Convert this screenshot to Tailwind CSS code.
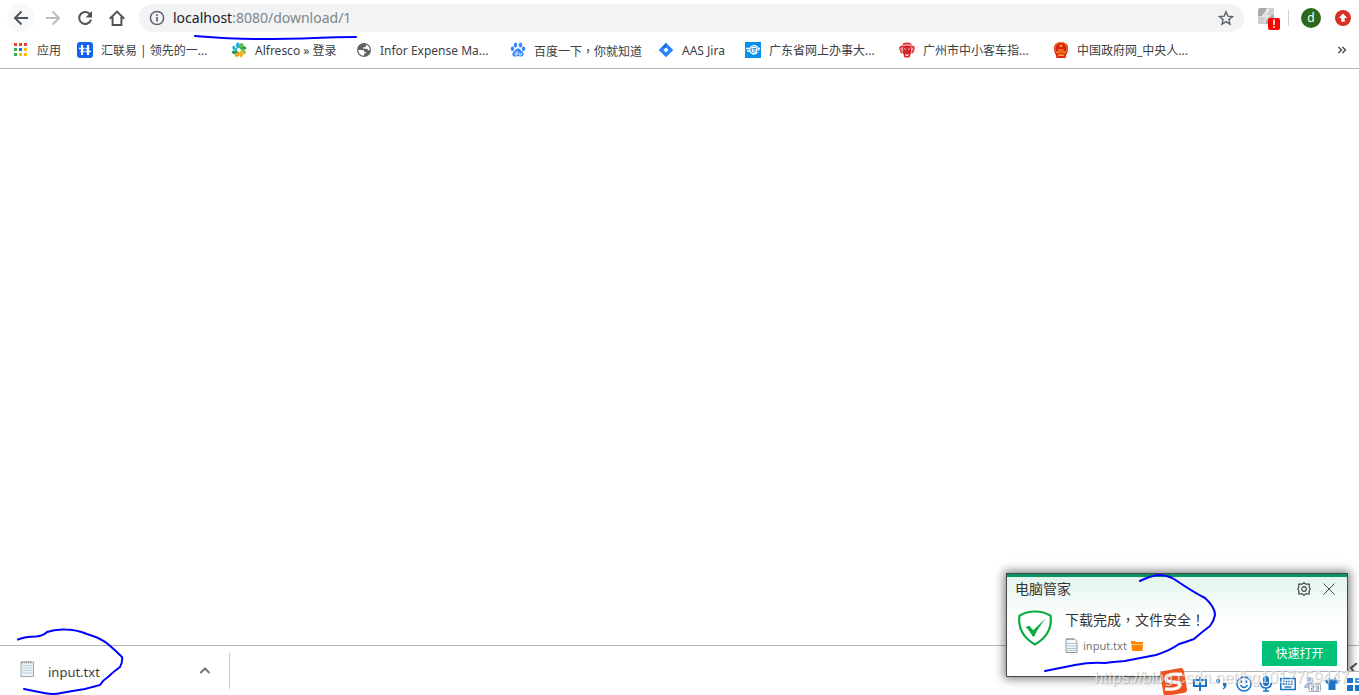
<!DOCTYPE html>
<html lang="zh-CN">
<head>
<meta charset="utf-8">
<title>localhost:8080/download/1</title>
<script src="https://cdn.jsdelivr.net/npm/@tailwindcss/browser@4"></script>
</head>
<body class="relative flex h-screen flex-col overflow-hidden bg-white font-['Noto_Sans','Noto_Sans_CJK_SC',sans-serif] text-[#3c4043]">

<header class="shrink-0 border-b border-[#b6b4b6]">
  <div class="flex h-9 items-center pr-2 pl-[7px] text-[#5f6368]">
    <div class="flex items-center gap-1">
      <button aria-label="后退" class="flex size-7 items-center justify-center rounded-full bg-[#f8f9fa]"><svg class="size-4" viewBox="0 0 16 16" fill="none" stroke="#505357" stroke-width="2"><path d="M15 8H2.5M8.5 1.5L2 8l6.500 6.500"/></svg></button>
      <button aria-label="前进" class="flex size-7 items-center justify-center"><svg class="size-4" viewBox="0 0 16 16" fill="none" stroke="#bbbdbf" stroke-width="2"><path d="M1 8h12.500M7.500 1.500L14 8l-6.500 6.500"/></svg></button>
      <button aria-label="重新加载" class="flex size-7 items-center justify-center"><svg class="size-4" viewBox="0 0 16 16"><path d="M13.300 4.700A6 6 0 1 0 14 9.600" fill="none" stroke="#505357" stroke-width="2"/><path d="M15 1v6.500H8.500z" fill="#505357"/></svg></button>
      <button aria-label="主页" class="flex size-7 items-center justify-center"><svg class="size-4" viewBox="0 0 16 16" fill="none" stroke="#505357" stroke-width="2"><path d="M.8 8.800L8 1.600l7.200 7.200M3.600 7v8h8.800V7"/></svg></button>
    </div>
    <div class="ml-2 flex h-7 flex-1 items-center gap-2 rounded-full bg-[#f1f3f4] px-[10px]">
      <svg class="size-4 shrink-0" viewBox="0 0 16 16" fill="none" stroke="#5f6368"><circle cx="8" cy="8" r="6.600" stroke-width="1.500"/><path d="M8 7v4.500M8 4.200v1.700" stroke-width="1.700"/></svg>
      <div class="flex-1 text-sm text-[#80868b]"><span class="text-[#202124]">localhost</span>:8080/download/1</div>
      <button aria-label="收藏"><svg class="size-4" viewBox="0 0 16 16" fill="none" stroke="#5f6368" stroke-width="1.400"><path d="M8 1.800l1.800 4.300 4.700.4-3.600 3.100 1.100 4.600L8 11.700l-4 2.500 1.100-4.600-3.600-3.100 4.700-.4z"/></svg></button>
    </div>
    <button aria-label="扩展程序" class="ml-3 pt-[2px]"><svg class="h-6 w-6" viewBox="0 0 24 24"><rect x="2" y="1" width="16" height="16" rx="2" fill="#aaa"/><path d="M10 1h6a2 2 0 0 1 2 2v5h-8zM2 9h8v8H4a2 2 0 0 1-2-2z" fill="#cfcfcf"/><path d="M11 2L5 10h5l-2 6 7-8h-5l4-6z" fill="#f2f2f2" opacity=".8"/><rect x="12" y="11" width="12" height="12" rx="2" fill="#f00"/><path d="M18 12.500v5.500M18 19.300v1.700" stroke="#fff" stroke-width="1.600"/></svg></button>
    <div class="ml-2 h-4 w-px bg-[#cfd1d4]"></div>
    <button class="ml-3 flex size-5 items-center justify-center rounded-full bg-[#2d6a1e] text-xs leading-none text-white">d</button>
    <button aria-label="更新" class="ml-[14px]"><svg class="size-4" viewBox="0 0 16 16"><circle cx="8" cy="8" r="8" fill="#d93025"/><path d="M8 3.500L3.800 8h2.500v3.800h3.400V8h2.500z" fill="#fff"/></svg></button>
  </div>

  <nav class="flex h-8 items-center pb-1 pl-[13px] text-xs whitespace-nowrap">
    <a href="#" class="flex w-16 shrink-0 items-center gap-2"><svg class="size-4" viewBox="0 0 16 16"><path fill="#ea4335" d="M1 1h3v3H1zM6 1h3v3H6zM11 1h3v3h-3z"/><path fill="#34a853" d="M1 6h3v3H1zM1 11h3v3H1z"/><path fill="#1a73e8" d="M6 6h3v3H6z"/><path fill="#fbbc04" d="M6 11h3v3H6z"/><path fill="#fbbc04" d="M11 6h3v3h-3zM11 11h3v3h-3z"/></svg><span class="pt-[2px]">应用</span></a>
    <a href="#" class="flex w-[154px] shrink-0 items-center gap-2"><svg class="size-4" viewBox="0 0 16 16"><rect width="16" height="16" rx="3" fill="#1463f3"/><path d="M5 3v10M11 3v10" stroke="#fff" stroke-width="2"/><path d="M2 6.500h5.500M8.500 6.500h4M3.500 9.500h4M8.500 9.500H14" stroke="#fff" stroke-width="1.300"/></svg><span class="pt-[2px]">汇联易 | 领先的一...</span></a>
    <a href="#" class="flex w-[125px] shrink-0 items-center gap-2"><svg class="size-4" viewBox="0 0 16 16"><g fill="none" stroke-width="3" stroke-linecap="round"><path stroke="#1eaee6" d="M7.200 5Q5.500 3 7 2"/><path stroke="#57b947" d="M9 5.200Q9.300 2.500 11 2.700"/><path stroke="#28a34a" d="M10.700 6.700Q12.500 4.800 13.800 6.200"/><path stroke="#8cc63f" d="M11 8.700Q13.500 9 13.300 10.800"/><path stroke="#f8b41c" d="M9.700 10.700Q11.300 12.500 10 13.800"/><path stroke="#f8a01c" d="M7.300 11Q7 13.500 5.200 13.300"/><path stroke="#1c9b4b" d="M5.300 9.500Q3.500 11.300 2.200 10"/><path stroke="#36b5c6" d="M5 7.300Q2.500 7 2.800 5.200"/></g><circle cx="8" cy="8" r="1.700" fill="#fff"/></svg><span class="pt-[2px]">Alfresco » 登录</span></a>
    <a href="#" class="flex w-[154px] shrink-0 items-center gap-2"><svg class="size-4" viewBox="0 0 16 16"><circle cx="8" cy="8" r="7" fill="#5f6368"/><path d="M2.300 8h4.200c1.500 0 1.800 1 1.800 2h1.500v1.500H8v2.200C5 13.700 2.300 11.500 2.300 8zM10 2.700V4c0 .8-.7 1.300-1.500 1.300H7.300v1.400h3.200c1 0 1.500.6 1.500 1.500h1.800c0-2.500-1.300-4.700-3.800-5.500z" fill="#fff"/></svg><span class="pt-[2px]">Infor Expense Ma...</span></a>
    <a href="#" class="flex w-[148px] shrink-0 items-center gap-2"><svg class="size-4" viewBox="0 0 16 16"><g fill="#3385ff"><ellipse cx="5.500" cy="3" rx="1.700" ry="2.500"/><ellipse cx="10.500" cy="3" rx="1.700" ry="2.500"/><ellipse cx="2.500" cy="6.700" rx="1.700" ry="2.200"/><ellipse cx="13.500" cy="6.700" rx="1.700" ry="2.200"/><path d="M8 6.500c2 0 3 2 4.500 3.300 2.300 2.200.7 5.200-2 4.700-1.700-.3-3.300-.3-5 0-2.700.5-4.300-2.500-2-4.700C5 8.500 6 6.500 8 6.500z"/></g><path d="M7 9v4H5.500q-1.200-1.200 0-2.300H7M9 10.500v2.300h2.300v-2.300" fill="none" stroke="#fff" stroke-width=".9"/></svg><span class="pt-[2px]">百度一下<span lang="zh-TW" class="font-['Noto_Sans_CJK_TC',sans-serif]">，</span>你就知道</span></a>
    <a href="#" class="flex w-[87px] shrink-0 items-center gap-2"><svg class="size-4" viewBox="0 0 16 16"><path d="M8 .7L15.300 8 8 15.300.7 8z" fill="#2684ff"/><path d="M8 .7L4.500 5.500 8 6z" fill="#1264d8"/><path d="M8 5.500L10.500 8 8 10.500 5.500 8z" fill="#fff"/></svg><span class="pt-[2px]">AAS Jira</span></a>
    <a href="#" class="flex w-[154px] shrink-0 items-center gap-2"><svg class="size-4" viewBox="0 0 16 16"><path fill="#0b8fec" d="M0 0h16v16H0z"/><g fill="none" stroke="#fff"><path d="M1 6.500h4M2 9h3M12.500 5Q8 1.800 5.500 5.500T8 12q3 0 4.500-2" stroke-width="1.300"/><path d="M7 8h4M7 5.500h4q1.500 2.500 0 4.500H7.500z" stroke-width="1"/></g><path d="M12 5l3.500 1-2.500 3.500z" fill="#fff"/></svg><span class="pt-[2px]">广东省网上办事大...</span></a>
    <a href="#" class="flex w-[154px] shrink-0 items-center gap-2"><svg class="size-4" viewBox="0 0 16 16"><path d="M4 1.500Q8-.3 12 1.500l1 2.300Q16 3.500 15.700 7L14 11.500l-2-.5-1.500 4.500h-5L4 11l-2 .5L.3 7Q0 3.500 3 3.800z" fill="#d8242b"/><path d="M3.500 3.500Q8 2 12.500 3.500M3.200 5v5.500M12.800 5v5.500M5.300 6.500l1.500 1M10.700 6.500l-1.500 1M7 12v1.500h2V12M1.300 7h1.400M14.700 7h-1.400" fill="none" stroke="#fff" stroke-width=".9"/></svg><span class="pt-[2px]">广州市中小客车指...</span></a>
    <a href="#" class="flex w-[150px] shrink-0 items-center gap-2"><svg class="size-4" viewBox="0 0 16 16"><path d="M8 0q7 0 7 6.500 0 3.500-1.500 5.500L12.500 16h-9L2.500 12Q1 10 1 6.500 1 0 8 0z" fill="#db1f13"/><circle cx="8" cy="6.500" r="6" fill="none" stroke="#e9861b" stroke-width="1"/><path d="M8 2l.6 1.300H10L9 4.200l.4 1.300L8 4.700l-1.400.8L7 4.200l-1-.9h1.400zM5 7.500h6v1H5zM3.500 9.500h9v1h-9zM4.500 13.500q3.500-2 7 0v1q-3.500-1.500-7 0z" fill="#fbb42d"/></svg><span class="pt-[2px]">中国政府网_中央人...</span></a>
    <button aria-label="更多书签" class="mr-3 ml-auto"><svg class="size-[10px]" viewBox="0 0 10 10" fill="none" stroke="#505357" stroke-width="1.500"><path d="M1.500 2l3 3-3 3M5.500 2l3 3-3 3"/></svg></button>
  </nav>
</header>

<main class="flex-1"></main>

<footer class="flex h-[50px] shrink-0 items-center border-t border-[#b6b4b6]">
  <div class="flex h-9 w-[230px] items-center border-r border-[#c8c8c8] pr-[18px] pl-5">
    <svg class="-mt-1 h-[17px] w-[15px]" viewBox="0 0 15 17"><path d="M1 2h12.500v14.500H1z" fill="#edf3f7" stroke="#999" stroke-width=".9"/><path d="M2 5.500h10.500M2 8h10.500M2 10.500h10.500M2 13h10.500" stroke="#bed3e0"/><path d="M2 1v2.500M4.200 1v2.500M6.400 1v2.500M8.600 1v2.500M10.800 1v2.500" stroke="#888" stroke-width=".8"/></svg>
    <a href="#" class="ml-[13px] flex-1 pt-1 text-[13px]">input.txt</a>
    <button aria-label="下载选项"><svg class="size-3" viewBox="0 0 12 12" fill="none" stroke="#70757a" stroke-width="2"><path d="M1.500 8L6 3.500 10.500 8"/></svg></button>
  </div>
</footer>

<svg class="absolute right-0 bottom-5 h-3 w-[10px]" viewBox="0 0 10 12" fill="none" stroke="#555" stroke-width="2"><path d="M8 0L2 5l4 5"/></svg>

<section class="absolute right-[11px] bottom-[18px] flex h-[104px] w-[342px] flex-col border border-[#3e4a48] bg-gradient-to-b from-[#e1f4ec] to-white to-45% shadow-[0_0_9px_2px_rgba(0,0,0,0.5)]">
  <div class="h-[3px] shrink-0 bg-[#0a9460]"></div>
  <div class="flex h-6 items-center pr-3 pl-2 text-[#333]">
    <h2 class="flex-1 text-sm">电脑管家</h2>
    <button aria-label="设置"><svg class="size-[14px]" viewBox="0 0 14 14" fill="none" stroke="#444" stroke-width="1.200"><path d="M7 .7l1.800 1.500h3.400v3L13.300 7l-1.100 1.800v3H8.800L7 13.300l-1.800-1.500H1.800v-3L.7 7l1.100-1.800v-3h3.400z"/><circle cx="7" cy="7" r="2.300"/></svg></button>
    <button aria-label="关闭" class="ml-3"><svg class="size-3" viewBox="0 0 12 12" stroke="#444"><path d="M.5.5l11 11M11.500.500l-11 11"/></svg></button>
  </div>
  <div class="flex flex-1 pl-[10px]">
    <svg class="mt-[9px] h-9 w-9 shrink-0" viewBox="0 0 36 36"><path d="M18 1.500c5 0 10.500 1 15.500 4.200C35 17 31 27 18 34.500 5 27 1 17 2.500 5.700 7.500 2.500 13 1.500 18 1.500z" fill="#fff" stroke="#0cab44" stroke-width="2.200"/><path d="M8.500 17l4-1.200 3.500 4.500L29 8.200C24 14 20 20 17.200 26.500h-1.500C13.500 22.500 11.500 19.500 8.500 17z" fill="#0cab44"/></svg>
    <div class="ml-3 pt-2">
      <p class="text-sm leading-5 text-[#333]">下载完成<span lang="zh-TW" class="font-['Noto_Sans_CJK_TC',sans-serif]">，</span>文件安全<span lang="zh-TW" class="font-['Noto_Sans_CJK_TC',sans-serif]">！</span></p>
      <div class="mt-[7px] flex items-center text-[11px] leading-4 text-[#777]">
        <svg class="h-[17px] w-[13px]" viewBox="0 0 13 17"><path d="M1 2h8.500L12 4.500V15.500H1z" fill="#f5f9fb" stroke="#888" stroke-width=".9"/><path d="M2 6.500h9M2 9h9M2 11.500h9M2 13.500h9" stroke="#abc7d7"/><path d="M2 1v2M4 1v2M6 1v2M8 1v2" stroke="#888" stroke-width=".8"/></svg>
        <span class="mr-1 ml-[5px]">input.txt</span>
        <svg class="h-[10px] w-3" viewBox="0 0 12 10"><path d="M0 0h4l1 1h7v2H0zM.5 3.500H12L11.500 10H1z" fill="#ff8500"/></svg>
      </div>
    </div>
    <button class="mt-auto mr-[10px] mb-[10px] ml-auto h-[25px] w-[75px] bg-[#00c177] text-xs text-white">快速打开</button>
  </div>
</section>

<div class="absolute right-0 bottom-0 flex h-6 w-[199px] items-center border-t border-[#aab2b8] bg-white">
  <svg class="-mt-1 size-[27px] shrink-0 overflow-visible" viewBox="0 0 27 27"><rect x="1.500" y="1.500" width="24" height="25" rx="3" fill="#f0541e" transform="rotate(-10 13.500 13.500)"/><path d="M22 6.500Q7 5 6 10.500q0 3 7 3.500t7 3q-1 5-15 4" fill="none" stroke="#fff" stroke-width="3.400"/></svg>
  <div class="ml-[5px] flex items-center gap-[6px] text-[#1b74cc]">
    <svg class="size-4" viewBox="0 0 16 16" fill="none" stroke="currentColor" stroke-width="2"><path d="M2 4h12v6H2zM8 1v14"/></svg>
    <svg class="size-4" viewBox="0 0 16 16"><circle cx="4" cy="5" r="1.500" fill="none" stroke="currentColor" stroke-width="1.300"/><path d="M9 7h3.300q1 4-3 6.500l-.6-1Q10.500 11 10 10H9z" fill="currentColor"/></svg>
    <svg class="size-4" viewBox="0 0 16 16" fill="none" stroke="currentColor" stroke-width="1.500"><circle cx="8" cy="8" r="7"/><path d="M5.500 4.500v2.500M10.500 4.500v2.500M4.500 9Q8 14 11.500 9"/></svg>
    <svg class="size-4" viewBox="0 0 16 16"><rect x="5" y="0" width="6" height="10" rx="3" fill="currentColor"/><path d="M2.500 6.500Q3 12 8 12t5.500-5.500M8 12v3M5 15h6" fill="none" stroke="currentColor" stroke-width="1.700"/></svg>
    <svg class="size-4" viewBox="0 0 16 16" fill="none" stroke="currentColor"><rect x=".8" y="2.500" width="14.400" height="11" stroke-width="1.500"/><path d="M3 5.500h10M3 8.200h10" stroke-width="1.500" stroke-dasharray="1.600 1"/><path d="M4.500 11h7" stroke-width="1.400"/></svg>
  </div>
  <div class="ml-2 flex shrink-0 items-center gap-1 text-[#1b74cc]">
    <svg class="h-4 w-[17px]" viewBox="0 0 17 16"><circle cx="6" cy="4" r="3" fill="#aac2dc"/><path d="M0 12q0-5 6-5l3 1v4z" fill="#aac2dc"/><rect x="5" y="8" width="11.500" height="7.500" rx="1" fill="#fff" stroke="#9aa9bb"/><path d="M7 10h3v2H7.500v2H10M11.500 10h3v4h-3M12 12h2.500" stroke="#8297ae" fill="none"/></svg>
    <svg class="size-[14px]" viewBox="0 0 14 14"><path d="M4 1q3 2.500 6 0l4 3-2 3-1.500-.7V13h-7V6.300L2 7 0 4z" fill="currentColor"/></svg>
    <svg class="ml-1 size-[14px]" viewBox="0 0 14 14" fill="currentColor"><path d="M0 1h6v5H0zM0 8h6v6H0zM8 8h6v6H8z"/><path d="M9 2h4v3H9z" fill="none" stroke="currentColor" stroke-width="1.400"/></svg>
  </div>
</div>

<div class="absolute right-[10px] bottom-[7px] font-['Liberation_Sans',sans-serif] text-base leading-5 text-white/60 [text-shadow:1px_1px_1px_rgba(120,120,120,0.45)]">https://blog.csdn.net/hg1017759447</div>

<svg class="pointer-events-none absolute top-[30px] left-[190px] h-3 w-[170px]" viewBox="0 0 170 12" fill="none" stroke="#00f" stroke-width="2" stroke-linecap="round"><path d="M5 6Q40 9 65 9 100 9 125 8 145 7 166 7"/></svg>
<svg class="pointer-events-none absolute bottom-0 left-[15px] h-[70px] w-[112px]" viewBox="0 0 112 70" fill="none" stroke="#00f" stroke-width="2" stroke-linecap="round" stroke-linejoin="round"><path d="M3 14.500Q10 11.500 21 11.500 28 11 32 7 40 4 50 4.500 61 4.500 72 9 88 14 94 20 100 25 107 32 108 36 105 42 98 47 93 52 88 55 85 60 81 61 70 64 57 66 46 68 39 70 29 68 19 66 9 64"/></svg>
<svg class="pointer-events-none absolute right-[139px] bottom-[18px] h-[107px] w-[180px]" viewBox="0 0 180 107" fill="none" stroke="#00f" stroke-width="2" stroke-linecap="round" stroke-linejoin="round"><path d="M100 11Q110 6 118 5 127 5 134 9 153 22 165 28 175 37 175 45 174 51 170 56 162 62 154 69 146 72 139 74 131 80 116 85 100 88 85 91 72 92 65 93 50 92 35 95 20 98 5 101"/></svg>
</body>
</html>
